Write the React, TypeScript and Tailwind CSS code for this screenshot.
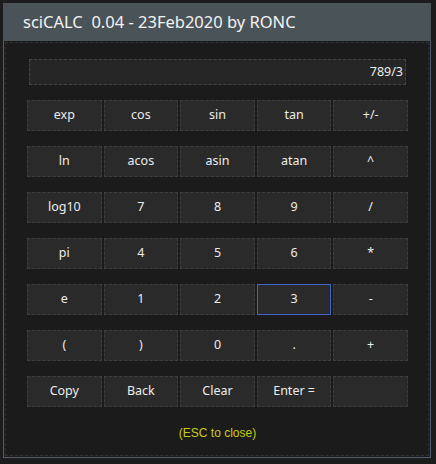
import React from 'react';

const ROWS: string[][] = [
  ['exp', 'cos', 'sin', 'tan', '+/-'],
  ['ln', 'acos', 'asin', 'atan', '^'],
  ['log10', '7', '8', '9', '/'],
  ['pi', '4', '5', '6', '*'],
  ['e', '1', '2', '3', '-'],
  ['(', ')', '0', '.', '+'],
  ['Copy', 'Back', 'Clear', 'Enter =', ''],
];

function Key({ label, focused }: { label: string; focused?: boolean }) {
  return (
    <button
      className={
        'h-[31px] bg-[#2a2a2a] text-[12.5px] text-[#ececec] flex items-center justify-center ' +
        (focused ? 'border border-[#3f66c8]' : 'border border-dashed border-[#3e3e3e]')
      }
    >
      {label}
    </button>
  );
}

export default function App() {
  return (
    <div
      className="w-[436px] h-[464px] bg-[#1c1c1c] pt-[3px] pl-[3px]"
      style={{ fontFamily: '"Noto Sans", "Open Sans", sans-serif' }}
    >
      <div className="w-[428px] h-[455px] flex flex-col">
        {/* Title bar */}
        <div className="h-[38px] shrink-0 bg-[#4a5358] flex items-center pl-[20px] text-[16.5px] text-[#f2f2f2] whitespace-pre">
          sciCALC  0.04 - 23Feb2020 by RONC
        </div>

        {/* Body */}
        <div className="flex-1 border-x border-b border-[#545c6e] p-px flex">
          <div className="flex-1 border border-dashed border-[#313131] bg-[#1b1b1b] flex flex-col pt-[16px] pl-[21px] pr-[20px]">
            <div className="mx-[2px] h-[26px] bg-[#262626] border border-dashed border-[#454545] flex items-center justify-end pr-[2px] text-[12.5px] text-[#ececec]">
              789/3
            </div>

            <div className="mt-[15px] grid grid-cols-5 gap-x-[2px] gap-y-[15px]">
              {ROWS.map((row, r) =>
                row.map((label, c) => (
                  <Key key={`${r}-${c}`} label={label} focused={label === '3'} />
                ))
              )}
            </div>

            <div
              className="mt-[17px] text-center text-[12px] text-[#c7cc14]"
              style={{ fontFamily: '"Liberation Sans", Arial, sans-serif' }}
            >
              (ESC to close)
            </div>
          </div>
        </div>
      </div>
    </div>
  );
}
